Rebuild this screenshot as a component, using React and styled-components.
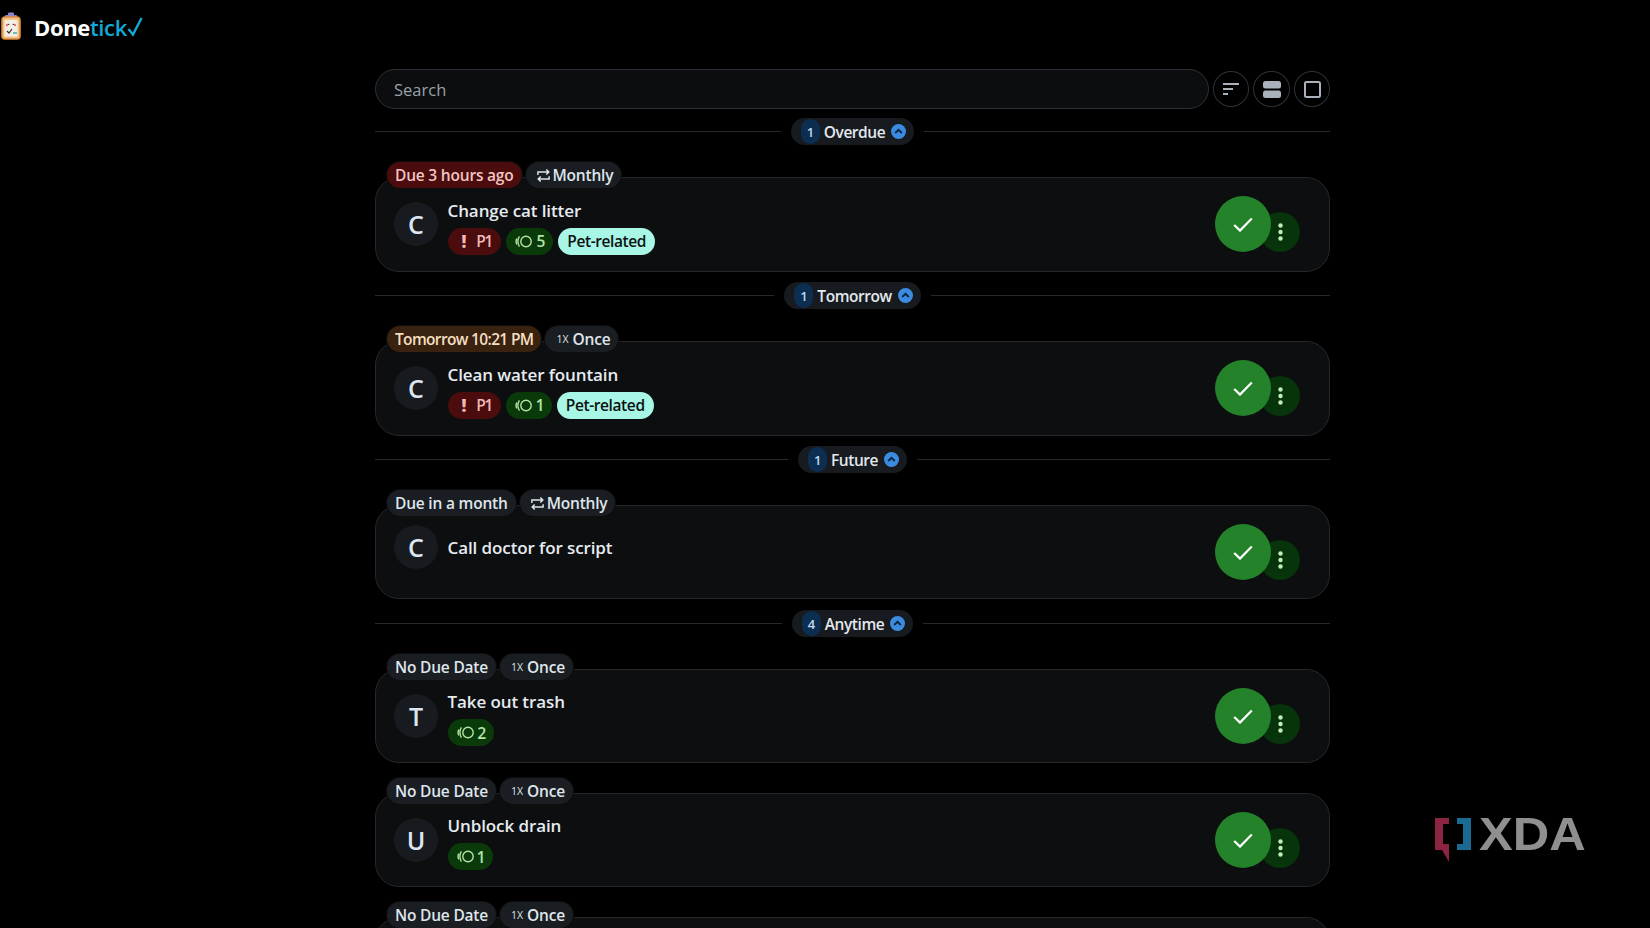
import React from "react";
import styled, { createGlobalStyle } from "styled-components";

const Global = createGlobalStyle`
  html, body { margin: 0; background: #000; height: 928px; overflow: hidden; }
  body { font-family: "Open Sans", "Noto Sans", sans-serif; color: #dde3ea; }
  * { box-sizing: border-box; }
`;

const Page = styled.div`position: relative; height: 928px; overflow: hidden; background: #000;`;
const Header = styled.header`display: flex; align-items: center; height: 53px; padding-left: 1px;`;
const Brand = styled.div`display: flex; align-items: center; margin-left: 13px; font-size: 22px; font-weight: 700; color: #fff; letter-spacing: -0.35px;`;
const Tick = styled.span`color: #12a9d6; font-weight: 600;`;
const Main = styled.main`width: 955px; margin-left: 375px; padding-top: 16px;`;
const Toolbar = styled.div`display: flex; align-items: center; gap: 4px; margin-bottom: 9px;`;
const Search = styled.input`
  flex: 1; height: 40px; margin-right: 0; padding: 1px 18px 0; border-radius: 20px; border: 1px solid #2c3238; background: #0b0d0e;
  color: #dde3ea; font: 400 16.5px "Open Sans", sans-serif;
  &::placeholder { color: #9aa1a8; opacity: 1; }
`;
const RoundButton = styled.button`
  width: 36.5px; height: 36px; padding: 0 0 0 1px; flex: none; display: grid; place-items: center; border-radius: 50%;
  border: 1px solid #2c3238; background: transparent; color: #a9b1ba;
`;
const Divider = styled.div`display: flex; align-items: center; gap: 10px; margin-bottom: 17px;`;
const Line = styled.div`flex: 1; height: 1px; background: #26292c;`;
const GroupPill = styled.div`
  height: 27px; display: flex; align-items: center; gap: 6px; padding: 0 8px 0 9px; border-radius: 14px; background: #171b1f;
  font-size: 15.5px; font-weight: 600; color: #e3e8ee; letter-spacing: -0.45px;
`;
const Count = styled.span`
  width: 19px; height: 25px; margin: 0 -2px 0 1px; border-radius: 10px; background: #0c2e50; color: #bcd9f5; display: grid; place-items: center; font-size: 13px; font-weight: 600;
`;
const Caret = styled.span`width: 15px; height: 15px; border-radius: 50%; background: #3b8ce0; display: grid; place-items: center;`;
const Item = styled.div`position: relative; margin-bottom: ${p => (p.$last ? 11 : 15) - (p.$tall ? 1 : 0)}px;`;
const ChipRow = styled.div`position: relative; z-index: 1; display: flex; gap: 4px; height: 26px; margin: 0 0 -11px 12px;`;
const Chip = styled.span`
  height: 26px; display: inline-flex; align-items: center; gap: 2px; padding: 0 8px; border-radius: 13px;
  background: ${p => p.$bg || "#1a1e22"}; color: ${p => p.$fg || "#dfe5ec"}; font-size: 15.5px; font-weight: 600; letter-spacing: ${p => p.$track ?? -0.2}px; white-space: nowrap;
  box-shadow: 0 0 0 1px #0b0d0e;
`;
const Once = styled.small`font-size: 10.5px; font-weight: 500; margin: 0 2px 0 3px; letter-spacing: 0;`;
const RepeatGlyph = styled.svg`margin-left: 2px;`;
const Card = styled.div`
  height: ${p => p.$tall ? 95 : 94}px; display: flex; align-items: center; padding: 0 29px ${p => p.$tall ? 1 : 0}px 18px; border: 1px solid #24282c; border-radius: 24px; background: #0c0e10;
`;
const Left = styled.div`flex: 1; display: flex; align-items: center; gap: 9.5px; margin-bottom: ${p => p.$plain ? 11 : 0}px;`;
const Avatar = styled.div`width: 44px; height: 44px; flex: none; display: grid; place-items: center; border-radius: 50%; background: #171b1f; color: #dde6f0; font-size: 25px; font-weight: 600;`;
const Body = styled.div`display: flex; flex-direction: column; gap: 5px; padding-top: ${p => p.$plain ? 2 : p.$tall ? 5 : 4}px;`;
const Title = styled.div`font-size: 17px; line-height: 24px; font-weight: 600; color: #e6ebf0; letter-spacing: -0.1px;`;
const Meta = styled.div`display: flex; gap: 5px;`;
const Tag = styled.span`
  height: 27px; display: inline-flex; align-items: center; gap: ${p => p.$gap || 0}px; padding: ${p => p.$pad || "0 9px"}; border-radius: 14px;
  background: ${p => p.$bg}; color: ${p => p.$fg}; font-size: 15.5px; font-weight: 600; letter-spacing: ${p => p.$track ?? -0.4}px; white-space: nowrap;
  font-variant-numeric: proportional-nums;
`;
const Bang = styled.b`font-weight: 800; font-size: 17px; margin: 0 5px 0 5px;`;
const CheckButton = styled.button`position: relative; z-index: 1; width: 56px; height: 56px; flex: none; padding: 0; display: grid; place-items: center; border: 0; border-radius: 50%; background: #23822a;`;
const MenuButton = styled.button`width: 40px; height: 40px; flex: none; margin: 16px 0 0 -11px; padding: 0; display: grid; place-items: center; border: 0; border-radius: 50%; background: #07340a;`;
const Watermark = styled.div`position: absolute; left: 1435px; top: 818px; display: flex; align-items: flex-start; gap: 8px;`;
const WatermarkText = styled.span`font: 700 46px/33px "Liberation Sans", sans-serif; letter-spacing: 0; color: #8f8f8f; transform: scaleX(1.1); transform-origin: left;`;

const Logo = () => (
  <svg width="20" height="28" viewBox="0 0 20 28" style={{ marginTop: -1 }}>
    <rect x="7" y="0.5" width="6" height="4" rx="1" fill="#8d87c9" />
    <rect x="4" y="3" width="12" height="3" rx="1" fill="#8d87c9" />
    <rect x="1" y="5" width="18" height="22" rx="3" fill="#f1c48a" stroke="#e08b3c" strokeWidth="1.6" />
    <rect x="3.5" y="8" width="13" height="16.5" rx="1" fill="#f4efe6" />
    <circle cx="6" cy="13" r="1.2" fill="#e2727a" /><circle cx="14" cy="13" r="1.2" fill="#e2727a" />
    <path d="M7 12.4h1.4M11.6 12.4H13" stroke="#333" strokeWidth="1" />
    <path d="M6 19l2 2 3-4" stroke="#333" strokeWidth="1.2" fill="none" />
    <path d="M12 21h4" stroke="#35a8a0" strokeWidth="1.4" />
  </svg>
);
const BrandCheck = () => (
  <svg width="16" height="20" viewBox="0 0 16 20">
    <path d="M1.5 12l4.5 5.5L14.5 1" stroke="#12a9d6" strokeWidth="2.4" fill="none" />
  </svg>
);
const SortIcon = () => (
  <svg width="18" height="14" viewBox="0 0 18 14"><path d="M1 2h16M1 7h10M1 12h5" stroke="#a9b1ba" strokeWidth="2" /></svg>
);
const StackIcon = () => (
  <svg width="18" height="17" viewBox="0 0 18 17"><rect width="18" height="7.5" y="0" rx="2.5" fill="#a9b1ba" /><rect width="18" height="7.5" y="9.5" rx="2.5" fill="#a9b1ba" /></svg>
);
const SquareIcon = () => (
  <svg width="17" height="17" viewBox="0 0 17 17"><rect x="1" y="1" width="15" height="15" rx="1.5" fill="none" stroke="#a9b1ba" strokeWidth="2" /></svg>
);
const CaretIcon = () => (
  <svg width="9" height="7" viewBox="0 0 9 7"><path d="M1.2 5L4.5 1.8 7.8 5" stroke="#0c2440" strokeWidth="1.8" fill="none" /></svg>
);
const RepeatIcon = () => (
  <RepeatGlyph width="15" height="15" viewBox="0 0 24 24" fill="none" stroke="currentColor" strokeWidth="2.3">
    <path d="M3 11V6.5h17.5M16.5 2.5l4 4-4 4M21 13v4.5H3.5M7.5 21.5l-4-4 4-4" />
  </RepeatGlyph>
);
const StreakIcon = () => (
  <svg width="18" height="15" viewBox="0 0 18 15" fill="none" stroke="currentColor" strokeWidth="1.4">
    <circle cx="11" cy="7.5" r="5.2" />
    <path d="M4.4 2.4C2.4 5.2 2.4 9.8 4.4 12.6" /><path d="M1.8 4.6C.9 6.4.9 8.6 1.8 10.4" />
  </svg>
);
const CheckIcon = () => (
  <svg width="20" height="15" viewBox="0 0 20 15"><path d="M1.2 8l5.8 5.6L18.8 1.4" stroke="#fff" strokeWidth="2.2" fill="none" /></svg>
);
const DotsIcon = () => (
  <svg width="5" height="18" viewBox="0 0 5 18" fill="#c2ecb9"><circle cx="2.5" cy="2.5" r="2.2" /><circle cx="2.5" cy="9" r="2.2" /><circle cx="2.5" cy="15.5" r="2.2" /></svg>
);

const red = ["#4a0c0c", "#f3c4c4"];
const amber = ["#3a2210", "#f5dfc0"];
const groups = [
  { count: 1, name: "Overdue", items: [{ letter: "C", title: "Change cat litter", due: "Due 3 hours ago", tone: red, repeat: "Monthly", p1: true, streak: 5, label: "Pet-related", tall: true }] },
  { count: 1, name: "Tomorrow", items: [{ letter: "C", title: "Clean water fountain", due: "Tomorrow 10:21 PM", tone: amber, track: -0.65, repeat: "Once", p1: true, streak: 1, label: "Pet-related", tall: true }] },
  { count: 1, name: "Future", items: [{ letter: "C", title: "Call doctor for script", due: "Due in a month", repeat: "Monthly" }] },
  { count: 4, name: "Anytime", items: [
    { letter: "T", title: "Take out trash", due: "No Due Date", repeat: "Once", streak: 2 },
    { letter: "U", title: "Unblock drain", due: "No Due Date", repeat: "Once", streak: 1 },
    { due: "No Due Date", repeat: "Once", stub: true },
  ] },
];

const Task = ({ t, last }) => {
  const hasMeta = t.p1 || t.streak || t.label;
  return (
    <Item $last={last} $tall={t.tall}>
      <ChipRow>
        <Chip $bg={t.tone?.[0]} $fg={t.tone?.[1]} $track={t.track}>{t.due}</Chip>
        <Chip>
          {t.repeat === "Once" ? <Once>1X</Once> : <RepeatIcon />}
          {t.repeat}
        </Chip>
      </ChipRow>
      <Card $tall={t.tall}>
        {!t.stub && (
          <>
            <Left $plain={!hasMeta}>
              <Avatar>{t.letter}</Avatar>
              <Body $plain={!hasMeta} $tall={t.tall}>
                <Title>{t.title}</Title>
                {hasMeta && (
                  <Meta>
                    {t.p1 && <Tag $bg="#4a0c0c" $fg="#f3b9b9" $gap={5} $pad="0 9px" $track={-0.3}><Bang>!</Bang>P1</Tag>}
                    {t.streak && <Tag $bg="#0a3a0a" $fg="#b4e4a4" $gap={3} $pad="0 8px 0 9px" $track={0}><StreakIcon />{t.streak}</Tag>}
                    {t.label && <Tag $bg="#a8f6e6" $fg="#0b1210">{t.label}</Tag>}
                  </Meta>
                )}
              </Body>
            </Left>
            <CheckButton aria-label="Complete"><CheckIcon /></CheckButton>
            <MenuButton aria-label="More"><DotsIcon /></MenuButton>
          </>
        )}
      </Card>
    </Item>
  );
};

export default function App() {
  return (
    <Page>
      <Global />
      <Header>
        <Logo />
        <Brand>Done<Tick>tick</Tick><BrandCheck /></Brand>
      </Header>
      <Main>
        <Toolbar>
          <Search placeholder="Search" />
          <RoundButton aria-label="Sort"><SortIcon /></RoundButton>
          <RoundButton aria-label="Compact"><StackIcon /></RoundButton>
          <RoundButton aria-label="Single"><SquareIcon /></RoundButton>
        </Toolbar>
        {groups.map(g => (
          <section key={g.name}>
            <Divider>
              <Line />
              <GroupPill><Count>{g.count}</Count>{g.name}<Caret><CaretIcon /></Caret></GroupPill>
              <Line />
            </Divider>
            {g.items.map((t, i) => <Task key={i} t={t} last={i === g.items.length - 1} />)}
          </section>
        ))}
      </Main>
      <Watermark>
        <svg width="36" height="44" viewBox="0 0 36 44">
          <path d="M14 0H0V32H7L14 44V26H8V6H14Z" fill="#8c2340" />
          <path d="M22 0H36V32H22V26H28V6H22Z" fill="#1b6a94" />
        </svg>
        <WatermarkText>XDA</WatermarkText>
      </Watermark>
    </Page>
  );
}
